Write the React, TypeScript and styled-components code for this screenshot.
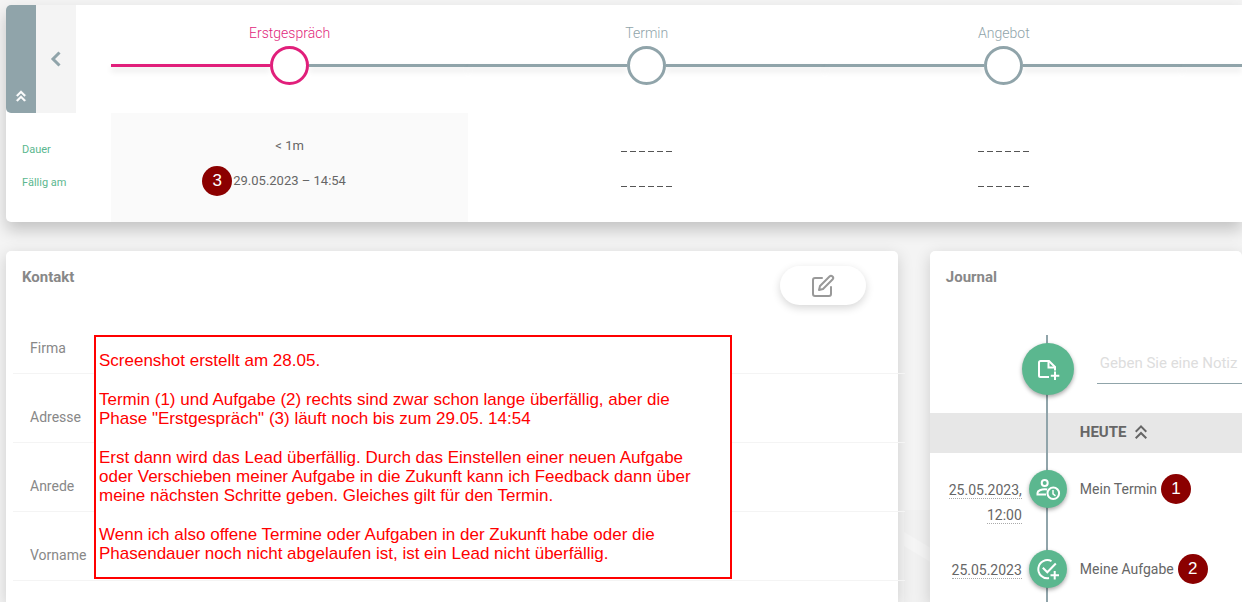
import React from "react";
import styled, { createGlobalStyle } from "styled-components";
import { MdKeyboardDoubleArrowUp } from "react-icons/md";
import { FiEdit } from "react-icons/fi";

const GlobalStyle = createGlobalStyle`
  *, *::before, *::after { box-sizing: border-box; }
  body {
    margin: 0;
    background: #f4f4f4;
    color: #666;
    font: 14px/24px "Roboto", sans-serif;
  }
  button, input { font: inherit; color: inherit; }
  button { border: 0; padding: 0; cursor: pointer; display: flex; align-items: center; justify-content: center; }
  h2 { margin: 0; }
`;

const Page = styled.main`
  position: relative;
  display: flex;
  flex-direction: column;
  gap: 29px;
  height: 100vh;
  overflow: hidden;
  padding: 5px 0 0 6px;
`;

const Watermark = styled.svg`
  position: absolute;
  z-index: -1;
  right: 0;
  bottom: 0;
  width: 338px;
  height: 92px;
`;

const ProcessCard = styled.section`
  flex: none;
  border-radius: 5px 0 0 5px;
  background: #fff;
  box-shadow: 0 8px 16px rgba(0, 0, 0, 0.2);
`;

const StageBar = styled.div`
  display: flex;
  height: 108px;
`;

const CollapseButton = styled.button`
  flex: none;
  width: 30px;
  border-radius: 5px 0 0 5px;
  background: #90a4aa;
  && { color: #fff; align-items: flex-end; padding-bottom: 8px; }
  path { stroke: currentColor; stroke-width: 1px; }
  path[fill="none"] { stroke: none; }
`;

const BackButton = styled.button`
  flex: none;
  width: 40px;
  background: #f4f4f4;
  && { color: #90a4aa; }
`;

const Columns = styled.div`
  flex: 1;
  display: grid;
  grid-template-columns: 6fr 6fr 6fr 1fr;
`;

const Stages = styled(Columns)`
  margin-left: 35px;
`;

const Track = styled.span<{ $active?: boolean }>`
  flex: 1;
  height: 3px;
  background: ${(p) => (p.$active ? "#e11f7b" : "#90a4aa")};
  box-shadow: 0 4px 6px rgba(0, 0, 0, 0.12);
`;

const Stage = styled.div<{ $active?: boolean }>`
  padding-top: 16px;
  text-align: center;
  font-weight: 300;
  color: ${(p) => (p.$active ? "#e11f7b" : "#90a4aa")};
`;

const StageLine = styled.div`
  display: flex;
  align-items: center;
  height: 41px;
`;

const TailLine = styled(StageLine)`
  margin-top: 40px;
`;

const StageDot = styled.button<{ $active?: boolean }>`
  flex: none;
  width: 39px;
  height: 39px;
  border-radius: 50%;
  background: #fff;
  && { border: 3px solid ${(p) => (p.$active ? "#e11f7b" : "#90a4aa")}; }
`;

const StageDetails = styled.div`
  display: flex;
  height: 109px;
`;

const DetailLabels = styled.div`
  flex: none;
  width: 105px;
  padding: 20px 0 0 16px;
  color: #5bb78f;
  font-size: 11px;
  line-height: 33px;
`;

const Detail = styled.div<{ $active?: boolean }>`
  padding-top: 15px;
  text-align: center;
  font-size: 13px;
  line-height: 35px;
  background: ${(p) => (p.$active ? "#fafafa" : "#fff")};
`;

const Anchor = styled.span`
  position: relative;
`;

const Badge = styled.span<{ $before?: boolean }>`
  position: absolute;
  top: 50%;
  ${(p) => (p.$before ? "right: 100%; margin-right: 1px;" : "left: 100%; margin-left: 4px;")}
  width: 30px;
  height: 30px;
  margin-top: -15px;
  border-radius: 50%;
  background: #8b0000;
  color: #fff;
  font: 17px/30px "Liberation Sans", sans-serif;
  text-align: center;
`;

const Dashes = styled.div`
  display: flex;
  align-items: center;
  justify-content: center;
  gap: 3px;
  height: 35px;
  padding-top: 12px;
  i { width: 6px; height: 1px; background: #555; }
`;

const Panels = styled.div`
  flex: 1;
  display: grid;
  grid-template-columns: minmax(0, 20fr) minmax(0, 7fr);
  gap: 32px;
`;

const Panel = styled.section`
  position: relative;
  border-radius: 5px 5px 0 0;
  background: #fff;
  box-shadow: 0 4px 16px rgba(0, 0, 0, 0.16);
`;

const PanelHeader = styled.header`
  display: flex;
  justify-content: space-between;
  height: 54px;
  padding: 15px 32px 0 16px;
`;

const PanelTitle = styled.h2`
  color: #888;
  font-size: 15px;
  line-height: 23px;
`;

const EditButton = styled.button`
  width: 86px;
  height: 39px;
  border-radius: 20px;
  background: #fff;
  && { color: #999; }
  box-shadow: 0 3px 8px rgba(0, 0, 0, 0.16);
`;

const Field = styled.div`
  height: 69px;
  margin: 0 -7px 0 7px;
  padding: 31px 0 0 17px;
  border-bottom: 1px solid #f4f4f4;
  color: #888;
`;

const Note = styled.aside`
  position: absolute;
  left: 88px;
  top: 84px;
  width: 638px;
  height: 244px;
  padding: 14px 3px 0;
  border: 2px solid #f00;
  background: #fff;
  color: #f00;
  font: 17px/19px "Liberation Sans", sans-serif;
  p { margin: 0 0 20px; }
`;

const Timeline = styled.div`
  position: relative;
  margin-top: 30px;
  height: 267px;
`;

const TimelineLine = styled.span`
  position: absolute;
  left: 116px;
  top: 0;
  bottom: 0;
  width: 2px;
  background: #90a4aa;
`;

const Row = styled.div`
  display: grid;
  grid-template-columns: 92px 52px minmax(0, 1fr);
`;

const Composer = styled(Row)`
  height: 78px;
  padding-top: 8px;
`;

const Round = styled.button<{ $large?: boolean }>`
  position: relative;
  z-index: 1;
  justify-self: center;
  grid-column: 2;
  width: ${(p) => (p.$large ? 52 : 38)}px;
  height: ${(p) => (p.$large ? 52 : 38)}px;
  border-radius: 50%;
  background: #5bb78f;
  && { color: #fff; }
  box-shadow: 0 2px 4px rgba(0, 0, 0, 0.35);
`;

const NoteInput = styled.input`
  height: 41px;
  min-width: 0;
  margin-left: 23px;
  padding: 0 3px;
  border: 0;
  border-bottom: 1px solid #90a4aa;
  border-radius: 0;
  background: none;
  outline: 0;
  font-size: 15px;
  &::placeholder { color: #ddd; opacity: 1; }
`;

const DayBar = styled.button`
  width: 100%;
  height: 40px;
  background: #e7e7e7;
  && {
    justify-content: flex-start;
    gap: 2px;
    padding: 0 0 2px 150px;
    font-size: 15px;
    font-weight: bold;
  }
`;

const Entry = styled(Row)`
  height: 80px;
  padding-top: 17px;
`;

const When = styled.time`
  padding: 8px 0 0 16px;
  line-height: 25px;
  text-align: right;
  span { border-bottom: 1px dotted #aaa; }
`;

const What = styled.div`
  padding: 7px 0 0 6px;
`;

const DashPair = () => (
  <>
    {[0, 1].map((row) => (
      <Dashes key={row}>
        {[0, 1, 2, 3, 4, 5].map((n) => <i key={n} />)}
      </Dashes>
    ))}
  </>
);

const Glyph = ({ children }: { children: React.ReactNode }) => (
  <svg width="26" height="26" viewBox="0 0 26 26" fill="none" stroke="currentColor" strokeWidth="2" aria-hidden="true">
    {children}
  </svg>
);

const BackIcon = () => (
  <Glyph>
    <path d="M16.500 6.500L10 13l6.500 6.500" strokeWidth="3" />
  </Glyph>
);

const NoteAddIcon = () => (
  <Glyph>
    <path d="M14 21H5.500a1.500 1.500 0 0 1-1.500-1.500v-13A1.500 1.500 0 0 1 5.500 5H14l6 6v3.500" />
    <path d="M13.500 5v6.500H20" />
    <path d="M20 15.500v8.500M15.800 19.800h8.500" />
  </Glyph>
);

const PersonClockIcon = () => (
  <Glyph>
    <circle cx="9.700" cy="7" r="3" />
    <path d="M11 18.500H2.500V17c0-2.200 3.800-3.800 7.500-3.800 1 0 1.500.1 2.200.3" />
    <circle cx="18.300" cy="17.300" r="5.800" />
    <path d="M18 14v3.800l2.500 2" strokeWidth="1.500" />
  </Glyph>
);

const TaskAddIcon = () => (
  <Glyph>
    <path d="M16.500 5.200A9 9 0 1 0 14 22" />
    <path d="M7.800 11.800l4.500 4.500L20.800 7.500" />
    <path d="M19.700 15v8.500M15.500 19.300h8.500" />
  </Glyph>
);

const stages = ["Erstgespräch", "Termin", "Angebot"];
const fields = ["Firma", "Adresse", "Anrede", "Vorname"];

export default function App() {
  return (
    <Page>
      <GlobalStyle />
      <Watermark viewBox="0 0 338 92" preserveAspectRatio="none" aria-hidden="true">
        <path d="M0 0h338v92H0z" fill="#f1f1f1" />
        <path d="M-10 16L60 58v14L-10 30z" fill="#f5f5f5" />
      </Watermark>
      <ProcessCard>
        <StageBar>
          <CollapseButton aria-label="Einklappen"><MdKeyboardDoubleArrowUp size={18} /></CollapseButton>
          <BackButton aria-label="Zurück"><BackIcon /></BackButton>
          <Stages>
            {stages.map((name, i) => (
              <Stage key={name} $active={i === 0}>
                {name}
                <StageLine>
                  <Track $active={i === 0} />
                  <StageDot $active={i === 0} aria-label={name} />
                  <Track />
                </StageLine>
              </Stage>
            ))}
            <TailLine><Track /></TailLine>
          </Stages>
        </StageBar>
        <StageDetails>
          <DetailLabels>
            <div>Dauer</div>
            <div>Fällig am</div>
          </DetailLabels>
          <Columns>
            <Detail $active>
              <div>&lt; 1m</div>
              <Anchor><Badge $before>3</Badge>29.05.2023 – 14:54</Anchor>
            </Detail>
            <Detail><DashPair /></Detail>
            <Detail><DashPair /></Detail>
          </Columns>
        </StageDetails>
      </ProcessCard>
      <Panels>
        <Panel>
          <PanelHeader>
            <PanelTitle>Kontakt</PanelTitle>
            <EditButton aria-label="Kontakt bearbeiten"><FiEdit size={24} /></EditButton>
          </PanelHeader>
          {fields.map((f) => <Field key={f}>{f}</Field>)}
          <Note>
            <p>Screenshot erstellt am 28.05.</p>
            <p>Termin (1) und Aufgabe (2) rechts sind zwar schon lange überfällig, aber die<br />Phase "Erstgespräch" (3) läuft noch bis zum 29.05. 14:54</p>
            <p>Erst dann wird das Lead überfällig. Durch das Einstellen einer neuen Aufgabe<br />oder Verschieben meiner Aufgabe in die Zukunft kann ich Feedback dann über<br />meine nächsten Schritte geben. Gleiches gilt für den Termin.</p>
            <p>Wenn ich also offene Termine oder Aufgaben in der Zukunft habe oder die<br />Phasendauer noch nicht abgelaufen ist, ist ein Lead nicht überfällig.</p>
          </Note>
        </Panel>
        <Panel>
          <PanelHeader><PanelTitle>Journal</PanelTitle></PanelHeader>
          <Timeline>
            <Composer>
              <Round $large aria-label="Notiz hinzufügen"><NoteAddIcon /></Round>
              <NoteInput aria-label="Notiz" placeholder="Geben Sie eine Notiz" />
            </Composer>
            <DayBar>HEUTE <MdKeyboardDoubleArrowUp size={24} /></DayBar>
            <TimelineLine />
            <Entry>
              <When><span>25.05.2023, 12:00</span></When>
              <Round aria-label="Termin"><PersonClockIcon /></Round>
              <What><Anchor>Mein Termin<Badge>1</Badge></Anchor></What>
            </Entry>
            <Entry>
              <When><span>25.05.2023</span></When>
              <Round aria-label="Aufgabe"><TaskAddIcon /></Round>
              <What><Anchor>Meine Aufgabe<Badge>2</Badge></Anchor></What>
            </Entry>
          </Timeline>
        </Panel>
      </Panels>
    </Page>
  );
}
